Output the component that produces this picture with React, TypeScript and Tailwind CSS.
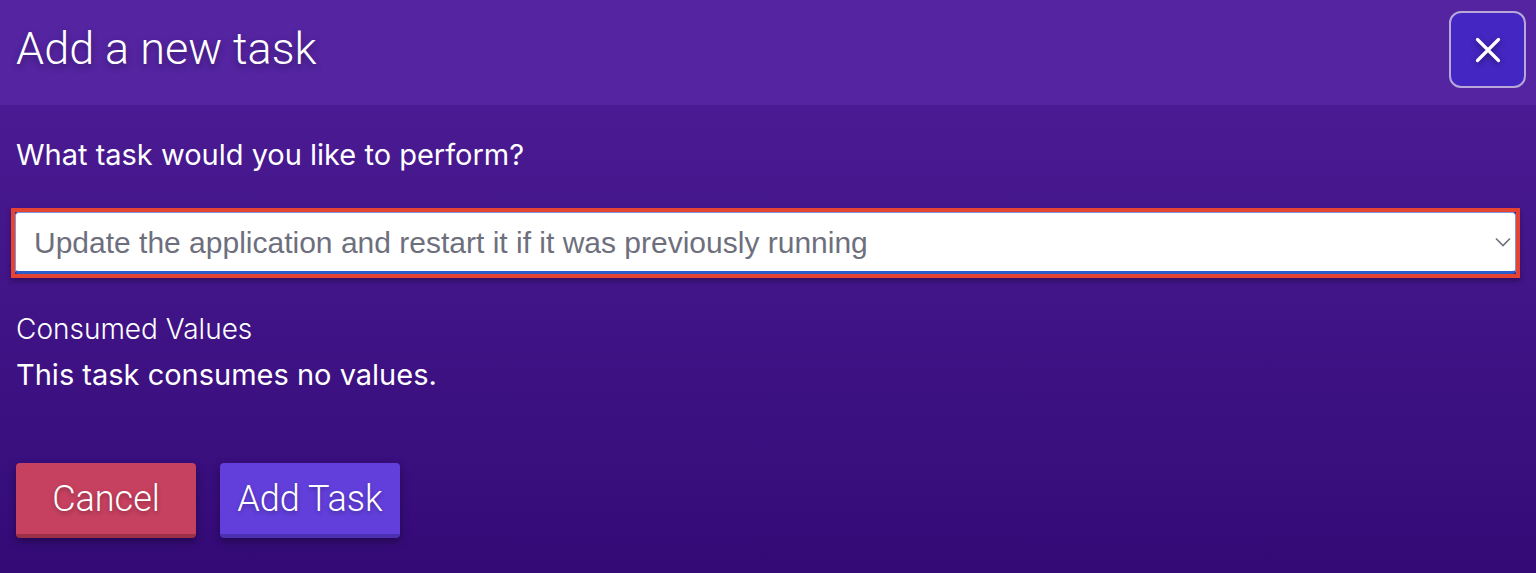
import { useState } from "react";

function CloseIcon() {
    return (
        <svg width="28" height="28" viewBox="0 0 24 24" fill="none" stroke="white" strokeWidth="2.8" strokeLinecap="round" className="drop-shadow-[0_2px_3px_rgba(0,0,0,0.45)]">
            <path d="M3 3L21 21M21 3L3 21" />
        </svg>
    );
}

export default function App() {
    const [task, setTask] = useState("update");

    return (
        <div className="w-[1536px] h-[573px] flex flex-col font-['Inter',sans-serif] text-white">
            {/* header */}
            <div className="h-[105px] bg-[#5424a1] flex items-start justify-between pl-4 pr-[10px] pt-[11px]">
                <h1 className="font-['Roboto',sans-serif] font-light text-[45px] leading-[76px] [text-shadow:0_3px_6px_rgba(0,0,0,0.35)]">Add a new task</h1>
                <button className="w-[77px] h-[77px] rounded-[12px] border-2 border-[#b7a8d9] bg-[#4426c2] flex items-center justify-center">
                    <CloseIcon />
                </button>
            </div>

            {/* body */}
            <div className="flex-1 bg-gradient-to-b from-[#4a1a92] to-[#340a77] px-4 pt-[30px]">
                <p className="text-[29px] leading-[40px]">What task would you like to perform?</p>

                <div className="mt-[33px] -ml-[5px] border-[4px] border-[#e44431] shadow-[0_3px_5px_rgba(0,0,0,0.3)]">
                    <div className="relative">
                        <select
                            value={task}
                            onChange={(e) => setTask(e.target.value)}
                            className="w-full h-[62px] appearance-none bg-white rounded-[4px] border border-[#7c97dc] border-b-[3px] border-b-[#2c5cc9] pl-[18px] text-[30px] text-[#6e6f7d] font-['Liberation_Sans',Arial,sans-serif] outline-none"
                        >
                            <option value="update">Update the application and restart it if it was previously running</option>
                        </select>
                        <svg className="absolute right-[5px] top-[25px]" width="16" height="10" viewBox="0 0 16 10" fill="none" stroke="#6e6f7d" strokeWidth="1.6">
                            <path d="M1 1.5L8 8.5L15 1.5" />
                        </svg>
                    </div>
                </div>

                <p className="mt-[33px] text-[28px] leading-[36px] font-light">Consumed Values</p>
                <p className="mt-[10px] text-[29px] leading-[36px]">This task consumes no values.</p>

                <div className="mt-[70px] flex gap-6">
                    <button className="w-[180px] h-[75px] rounded-[4px] bg-[#c6405f] border-b-[4px] border-b-[#9c3048] shadow-[0_4px_8px_rgba(0,0,0,0.35)] font-['Roboto',sans-serif] font-light text-[36px] [text-shadow:0_2px_4px_rgba(0,0,0,0.3)]">
                        Cancel
                    </button>
                    <button className="w-[180px] h-[75px] rounded-[4px] bg-[#623fdb] border-b-[4px] border-b-[#4b30b0] shadow-[0_4px_8px_rgba(0,0,0,0.35)] font-['Roboto',sans-serif] font-light text-[36px] [text-shadow:0_2px_4px_rgba(0,0,0,0.3)]">
                        Add Task
                    </button>
                </div>
            </div>
        </div>
    );
}
